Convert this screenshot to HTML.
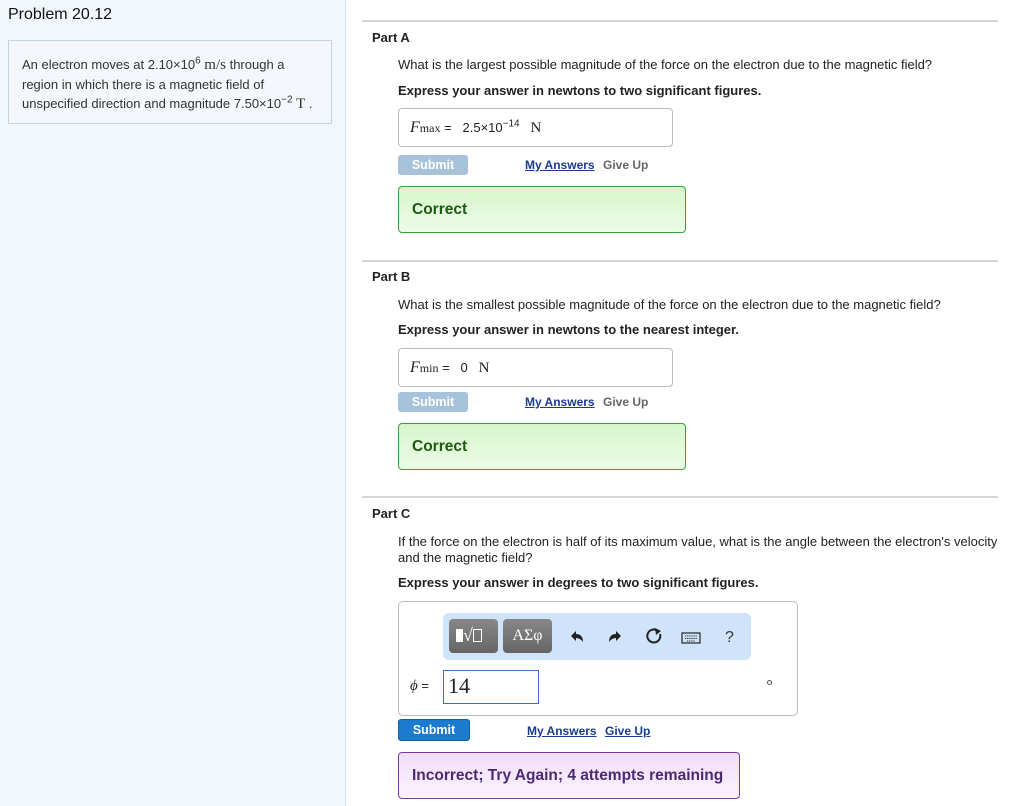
<!DOCTYPE html>
<html><head><style>
*{margin:0;padding:0;box-sizing:border-box}
body{width:1018px;height:806px;overflow:hidden;background:#fff;font-family:"Liberation Sans",Arial,sans-serif;color:#222;position:relative}
.a{position:absolute;white-space:nowrap}
sup{line-height:0}
#left{position:absolute;left:0;top:0;width:346px;height:806px;background:#f2f7fd;border-right:1px solid #d5dde6}
.hr{position:absolute;left:362px;width:636px;height:2px;background:#d8d8d8}
.part{font-weight:bold;font-size:13px;color:#222}
.q{font-size:13px}
.ins{font-size:13px;font-weight:bold}
.ans{position:absolute;left:398px;width:275px;height:39px;border:1px solid #bbb;border-radius:4px;background:#fff;font-size:13px}
.sub{position:absolute;left:398px;width:70px;height:20px;border-radius:3px;background:#a7c3dc;color:#fff;font-weight:bold;font-size:12.5px;text-align:center;line-height:20px}
.ma{font-size:12px;font-weight:bold;color:#1a3b8f;text-decoration:underline}
.gu{font-size:12px;font-weight:bold;color:#666}
.ok{position:absolute;left:398px;width:288px;height:47px;border:1px solid #3aa33a;border-radius:4px;background:linear-gradient(#d6f6cc,#ecfce6);color:#1d5a12;font-weight:bold;font-size:15.5px;padding:14px 0 0 13px}
.ser{font-family:"Liberation Serif",serif}
</style></head><body>
<div id="left"></div>
<div class="a" style="left:8px;top:6px;font-size:16px;color:#111">Problem 20.12</div>
<div class="a" style="left:8px;top:40px;width:324px;height:84px;border:1px solid #c5d3e0;background:#f4f8fd"></div>
<div class="a" style="left:22px;top:55px;font-size:13px;line-height:19px;color:#333">An electron moves at 2.10×10<sup style="font-size:10px">6</sup> <span class="ser" style="font-size:15px">m/s</span> through a<br>region in which there is a magnetic field of<br>unspecified direction and magnitude 7.50×10<sup style="font-size:10px">−2</sup> <span class="ser" style="font-size:15px">T</span> .</div>

<div class="hr" style="top:20px"></div>
<div class="a part" style="left:372px;top:30px">Part A</div>
<div class="a q" style="left:398px;top:57px">What is the largest possible magnitude of the force on the electron due to the magnetic field?</div>
<div class="a ins" style="left:398px;top:83px">Express your answer in newtons to two significant figures.</div>
<div class="ans" style="top:108px"><span class="a" style="left:11px;top:10px"><i class="ser" style="font-size:16px">F</i><span class="ser" style="font-size:12px">max</span> = &nbsp;&nbsp;2.5×10<sup style="font-size:10px">−14</sup> &nbsp;&nbsp;<span class="ser" style="font-size:15px">N</span></span></div>
<div class="sub" style="top:155px">Submit</div>
<div class="a ma" style="left:525px;top:158px">My Answers</div>
<div class="a gu" style="left:603px;top:158px">Give Up</div>
<div class="ok" style="top:186px">Correct</div>

<div class="hr" style="top:260px"></div>
<div class="a part" style="left:372px;top:269px">Part B</div>
<div class="a q" style="left:398px;top:297px">What is the smallest possible magnitude of the force on the electron due to the magnetic field?</div>
<div class="a ins" style="left:398px;top:322px">Express your answer in newtons to the nearest integer.</div>
<div class="ans" style="top:348px"><span class="a" style="left:11px;top:10px"><i class="ser" style="font-size:16px">F</i><span class="ser" style="font-size:12px">min</span> = &nbsp;&nbsp;0 &nbsp;&nbsp;<span class="ser" style="font-size:15px">N</span></span></div>
<div class="sub" style="top:392px">Submit</div>
<div class="a ma" style="left:525px;top:395px">My Answers</div>
<div class="a gu" style="left:603px;top:395px">Give Up</div>
<div class="ok" style="top:423px">Correct</div>

<div class="hr" style="top:496px"></div>
<div class="a part" style="left:372px;top:506px">Part C</div>
<div class="a q" style="left:398px;top:534px;line-height:16px">If the force on the electron is half of its maximum value, what is the angle between the electron's velocity<br>and the magnetic field?</div>
<div class="a ins" style="left:398px;top:575px">Express your answer in degrees to two significant figures.</div>
<div class="a" style="left:398px;top:601px;width:400px;height:115px;border:1px solid #bbb;border-radius:5px"></div>
<div class="a" style="left:443px;top:613px;width:308px;height:47px;background:#cfe4fb;border-radius:6px"></div>
<div class="a" style="left:449px;top:619px;width:49px;height:34px;background:linear-gradient(#888,#666);border-radius:4px;color:#fff;font-size:20px;padding:5px 0 0 7px"><span style="display:inline-block;width:7px;height:13px;background:#fff;vertical-align:-1px"></span><span class="ser" style="font-size:18px">√</span><span style="display:inline-block;width:9px;height:13px;border:1px solid #fff;vertical-align:-1px"></span></div>
<div class="a ser" style="left:503px;top:619px;width:49px;height:34px;background:linear-gradient(#888,#666);border-radius:4px;color:#fff;font-size:16px;text-align:center;line-height:34px">ΑΣφ</div>
<svg class="a" style="left:566px;top:626px" width="180" height="22" viewBox="0 0 180 22">
<path d="M5 10 L10 5 L10 8 Q17 8 17 16 Q14 12 10 12 L10 15 Z" fill="#222"/>
<path d="M55 10 L50 5 L50 8 Q43 8 43 16 Q46 12 50 12 L50 15 Z" fill="#222"/>
<path d="M92 5 A6.5 6.5 0 1 0 94 8" fill="none" stroke="#222" stroke-width="2"/><path d="M89 2 L95 5 L90 9 Z" fill="#222"/>
<rect x="116" y="7" width="18" height="10" fill="none" stroke="#333" stroke-width="1.3"/><path d="M119 10h12M119 12.5h12M121 15h8" stroke="#333" stroke-width="1" stroke-dasharray="1.3 0.8"/>
<text x="159" y="16" font-family="Liberation Sans" font-size="16" fill="#333">?</text>
</svg>
<div class="a" style="left:410px;top:678px;font-size:13px"><i class="ser" style="font-size:15px">ϕ</i> =</div>
<div class="a ser" style="left:443px;top:670px;width:96px;height:34px;border:1px solid #3b6fc7;font-size:22px;padding:2px 0 0 4px">14</div>
<div class="a" style="left:767px;top:680px;width:5px;height:5px;border:1px solid #555;border-radius:50%"></div>
<div class="a" style="left:398px;top:719px;width:72px;height:22px;background:#1a7bcf;border:1px solid #15629f;border-radius:3px;color:#fff;font-weight:bold;font-size:12.5px;text-align:center;line-height:20px">Submit</div>
<div class="a ma" style="left:527px;top:724px">My Answers</div>
<div class="a ma" style="left:605px;top:724px">Give Up</div>
<div class="a" style="left:398px;top:752px;width:342px;height:47px;border:1px solid #7b3a9a;border-radius:4px;background:linear-gradient(#f2ddfb,#fbf2ff);color:#4a2a72;font-weight:bold;font-size:15.5px;padding:14px 0 0 13px">Incorrect; Try Again; 4 attempts remaining</div>
</body></html>
